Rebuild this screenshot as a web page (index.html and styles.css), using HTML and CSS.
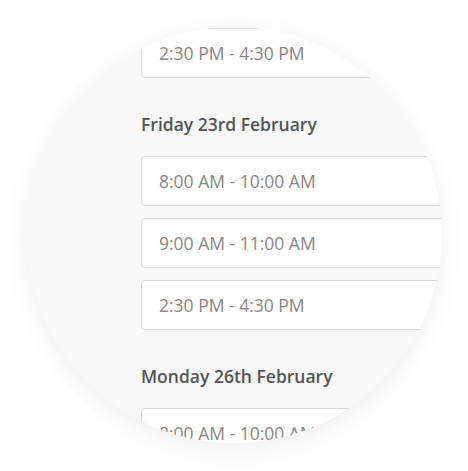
FILE: index.html
```html
<!DOCTYPE html>
<html>
<head>
<meta charset="utf-8">
<link rel="stylesheet" href="styles.css">
</head>
<body>
<div class="stage">
  <div class="lens">
    <div class="schedule">
      <div class="slot first">2:30 PM - 4:30 PM</div>
      <h3 class="day">Friday 23rd February</h3>
      <div class="slot">8:00 AM - 10:00 AM</div>
      <div class="slot">9:00 AM - 11:00 AM</div>
      <div class="slot">2:30 PM - 4:30 PM</div>
      <h3 class="day">Monday 26th February</h3>
      <div class="slot">8:00 AM - 10:00 AM</div>
    </div>
  </div>
</div>
</body>
</html>
```
FILE: styles.css
```css
html, body {
  margin: 0;
  padding: 0;
  background: #ffffff;
}
.stage {
  width: 468px;
  height: 471px;
  padding: 27px 0 0 26px;
  box-sizing: border-box;
}
.lens {
  width: 416px;
  height: 416px;
  border-radius: 50%;
  overflow: hidden;
  background: #f8f8f8;
  box-shadow: 0 6px 28px rgba(0, 0, 0, 0.07);
}
.schedule {
  display: flex;
  flex-direction: column;
  padding-left: 115px;
  padding-top: 1px;
  font-family: "Open Sans", sans-serif;
}
.slot {
  width: 400px;
  height: 50px;
  box-sizing: border-box;
  border: 1px solid #dadada;
  border-radius: 4px;
  background: #ffffff;
  display: flex;
  align-items: center;
  padding-left: 17px;
  font-size: 17.5px;
  color: #8a8685;
  margin-bottom: 12px;
}
.slot.first {
  margin-bottom: 0;
}
.day {
  margin: 34px 0 20px;
  font-size: 17.5px;
  line-height: 24px;
  font-weight: 600;
  color: #555555;
}
.slot + .day {
  margin-top: 22px;
}
.slot.first + .day {
  margin-top: 34px;
}
```
